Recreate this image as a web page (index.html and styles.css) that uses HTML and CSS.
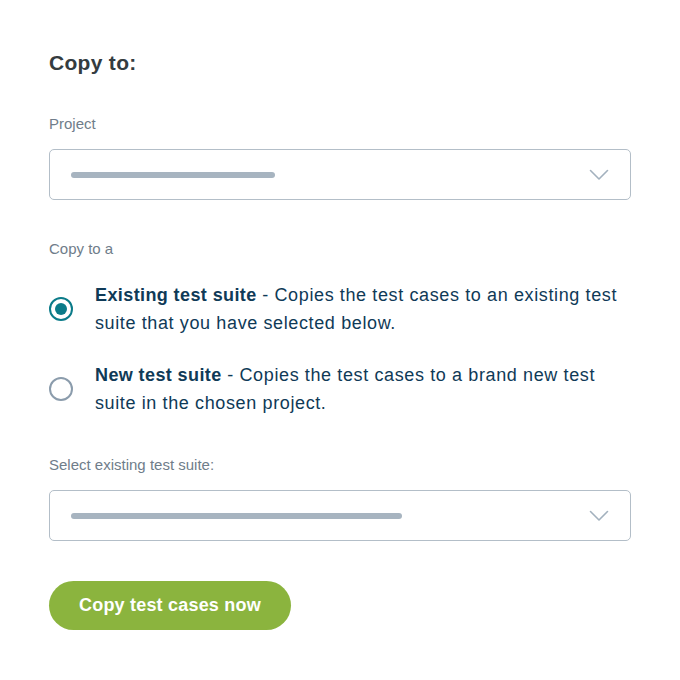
FILE: index.html
```html
<!DOCTYPE html>
<html>
<head>
<meta charset="utf-8">
<link rel="stylesheet" href="styles.css">
</head>
<body>
<div class="panel">
  <h1 class="title">Copy to:</h1>
  <div class="label label-project">Project</div>
  <div class="select">
    <span class="bar bar-short"></span>
    <svg class="chev" width="20" height="12" viewBox="0 0 20 12"><path d="M1.5 1.5 L10 10 L18.5 1.5" fill="none" stroke="#a3b1be" stroke-width="1.6" stroke-linecap="round" stroke-linejoin="round"/></svg>
  </div>
  <div class="label label-copy">Copy to a</div>
  <div class="options">
    <div class="option">
      <span class="radio radio-on"><span class="dot"></span></span>
      <p class="opt-text"><b>Existing test suite</b> - Copies the test cases to an existing test suite that you have selected below.</p>
    </div>
    <div class="option">
      <span class="radio"></span>
      <p class="opt-text"><b>New test suite</b> - Copies the test cases to a brand new test suite in the chosen project.</p>
    </div>
  </div>
  <div class="label label-suite">Select existing test suite:</div>
  <div class="select">
    <span class="bar bar-long"></span>
    <svg class="chev" width="20" height="12" viewBox="0 0 20 12"><path d="M1.5 1.5 L10 10 L18.5 1.5" fill="none" stroke="#a3b1be" stroke-width="1.6" stroke-linecap="round" stroke-linejoin="round"/></svg>
  </div>
  <button class="btn">Copy test cases now</button>
</div>
</body>
</html>
```
FILE: styles.css
```css
html, body { margin: 0; padding: 0; background: #ffffff; }
body { font-family: "Liberation Sans", Arial, sans-serif; }
.panel { padding: 51px 49px 0 49px; display: flex; flex-direction: column; align-items: flex-start; }
.title { margin: 0; font-size: 21px; letter-spacing: 0.3px; font-weight: bold; color: #343c40; line-height: 24px; }
.label { font-size: 15px; color: #6f7d8a; line-height: 18px; }
.label-project { margin-top: 40px; }
.label-copy { margin-top: 40px; }
.label-suite { margin-top: 39px; }
.select { align-self: stretch; box-sizing: border-box; height: 51px; margin-top: 16px; border: 1px solid #b3bec8; border-radius: 5px; display: flex; align-items: center; justify-content: space-between; padding: 0 21px 0 21px; }
.bar { display: block; height: 6px; border-radius: 3px; background: #a7b4c0; }
.bar-short { width: 204px; }
.bar-long { width: 331px; }
.chev { display: block; margin-top: 1px; }
.options { margin-top: 23px; display: flex; flex-direction: column; gap: 24px; align-self: stretch; }
.option { display: flex; align-items: center; gap: 22px; }
.radio { flex: none; box-sizing: border-box; width: 24px; height: 24px; border-radius: 50%; border: 2px solid #8b9cac; display: flex; align-items: center; justify-content: center; }
.radio-on { border-color: #0b7b89; }
.dot { width: 12px; height: 12px; border-radius: 50%; background: #0b7b89; }
.opt-text { margin: 0; font-size: 18px; letter-spacing: 0.62px; line-height: 28px; color: #0f3a57; }
.opt-text b { font-weight: bold; letter-spacing: 0.4px; }
.btn { margin-top: 40px; height: 49px; padding: 0 30px; border: none; border-radius: 25px; background: #8bb43e; color: #ffffff; font-family: "Liberation Sans", Arial, sans-serif; font-size: 18px; letter-spacing: 0.2px; font-weight: bold; }
```
